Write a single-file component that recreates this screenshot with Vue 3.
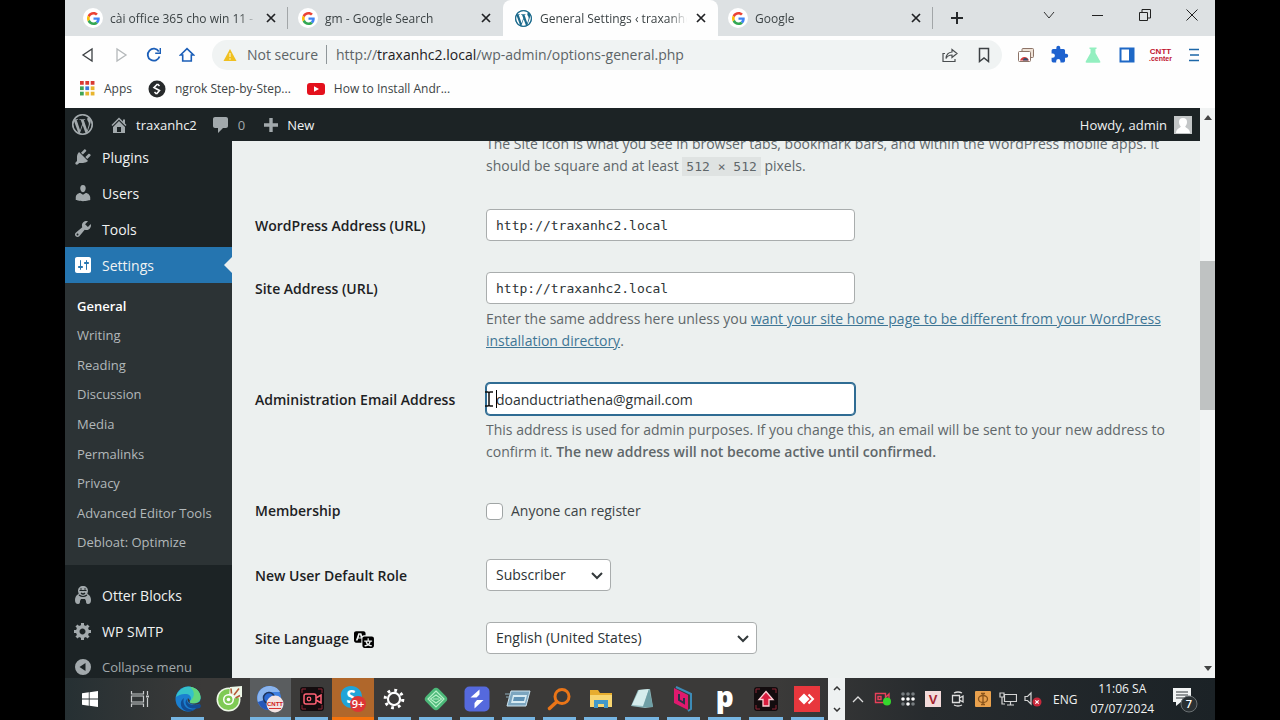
<template>
  <div class="desktop">
    <div class="browser">
      <!-- Tab strip -->
      <div class="tab-strip">
        <div
          v-for="(tab, index) in tabs"
          :key="index"
          class="tab"
          :class="{ active: index === activeTab, divided: tab.divided }"
          @click="activeTab = index"
        >
          <span class="favicon">
            <svg v-if="tab.icon === 'google'" viewBox="0 0 48 48" width="13" height="13">
              <path fill="#ea4335" d="M24 9.5c3.54 0 6.71 1.22 9.21 3.6l6.85-6.85C35.9 2.38 30.47 0 24 0 14.62 0 6.51 5.38 2.56 13.22l7.98 6.19C12.43 13.72 17.74 9.5 24 9.5z" />
              <path fill="#4285f4" d="M46.98 24.55c0-1.57-.15-3.09-.38-4.55H24v9.02h12.94c-.58 2.96-2.26 5.48-4.78 7.18l7.73 6c4.51-4.18 7.09-10.36 7.09-17.65z" />
              <path fill="#fbbc05" d="M10.53 28.59c-.48-1.45-.76-2.99-.76-4.59s.27-3.14.76-4.59l-7.98-6.19C.92 16.46 0 20.12 0 24c0 3.88.92 7.54 2.56 10.78l7.97-6.19z" />
              <path fill="#34a853" d="M24 48c6.48 0 11.93-2.13 15.89-5.81l-7.73-6c-2.15 1.45-4.92 2.3-8.16 2.3-6.26 0-11.57-4.22-13.47-9.91l-7.98 6.19C6.51 42.62 14.62 48 24 48z" />
            </svg>
            <svg v-else viewBox="0 0 24 24" width="17" height="17">
              <path fill="#1b6a8c" :d="wpLogo" />
              <circle cx="12" cy="12" r="11" fill="none" stroke="#1b6a8c" stroke-width="1.5" />
            </svg>
          </span>
          <span class="tab-title">{{ tab.title }}</span>
          <button class="tab-close" aria-label="Close tab">
            <svg viewBox="0 0 10 10" width="10" height="10">
              <path d="M1 1l8 8M9 1L1 9" stroke="#202124" stroke-width="1.7" />
            </svg>
          </button>
        </div>
        <button class="new-tab" aria-label="New tab">
          <svg viewBox="0 0 14 14" width="14" height="14">
            <path d="M7 1v12M1 7h12" stroke="#26292b" stroke-width="2" />
          </svg>
        </button>
        <div class="window-controls">
          <button aria-label="Search tabs">
            <svg viewBox="0 0 12 12" width="12" height="12"><path d="M1 3l5 6 5-6" fill="none" stroke="#333" /></svg>
          </button>
          <button aria-label="Minimize">
            <svg viewBox="0 0 12 12" width="12" height="12"><path d="M1 6.5h11" stroke="#222" /></svg>
          </button>
          <button aria-label="Restore">
            <svg viewBox="0 0 12 12" width="12" height="12">
              <path d="M.5 3.5h8v8h-8zM3 3.5V.5h8.5v8.5H8.5" fill="none" stroke="#222" />
            </svg>
          </button>
          <button aria-label="Close">
            <svg viewBox="0 0 12 12" width="12" height="12"><path d="M.5.5l11 11M11.5.5l-11 11" stroke="#222" /></svg>
          </button>
        </div>
      </div>

      <!-- Address bar -->
      <div class="toolbar">
        <div class="nav-buttons">
          <button aria-label="Back">
            <svg viewBox="0 0 16 16" width="16" height="16"><path d="M12 2v12L3 8z" fill="none" stroke="#3c4043" stroke-width="1.3" /></svg>
          </button>
          <button aria-label="Forward">
            <svg viewBox="0 0 16 16" width="16" height="16"><path d="M4 2v12l9-6z" fill="none" stroke="#b4b8ba" stroke-width="1.3" /></svg>
          </button>
          <button aria-label="Reload">
            <svg viewBox="0 0 16 16" width="16" height="16">
              <path d="M13.5 9.500A6 6 0 1 1 12.800 4.400" fill="none" stroke="#1c5fb8" stroke-width="1.8" />
              <path d="M15 1v6H9.200V5.600h4.400V1z" fill="#1c5fb8" />
            </svg>
          </button>
          <button aria-label="Home">
            <svg viewBox="0 0 16 16" width="16" height="16">
              <path d="M1.500 8L8 1.700 14.500 8h-2.200v6H3.700V8z" fill="none" stroke="#1c5fb8" stroke-width="1.6" />
            </svg>
          </button>
        </div>
        <div class="omnibox">
          <svg viewBox="0 0 14 14" width="14" height="14">
            <path d="M7 1l6.500 12H.5z" fill="#f0c020" />
            <path d="M7 5v4M7 10.300v1.400" stroke="#fbeeb8" stroke-width="1.3" />
          </svg>
          <span class="not-secure">Not secure</span>
          <span class="url">http://<b>traxanhc2.local</b>/wp-admin/options-general.php</span>
          <button aria-label="Share">
            <svg viewBox="0 0 16 16" width="16" height="16" fill="none" stroke="#4a4e50" stroke-width="1.2">
              <path d="M3 6.500H1v8h12V12" />
              <path d="M10 2.500l5 4-5 4V8C7 8 5.300 9 4 11.500 4.300 7.500 6.500 5.300 10 5z" />
            </svg>
          </button>
          <button aria-label="Bookmark this tab">
            <svg viewBox="0 0 16 16" width="16" height="16"><path d="M3.500 1.500h9v13L8 11l-4.500 3.500z" fill="none" stroke="#3c4043" stroke-width="1.5" /></svg>
          </button>
        </div>
        <div class="extensions">
          <button aria-label="Screenshot tool">
            <svg viewBox="0 0 16 16" width="16" height="16">
              <rect x="4" y="1.5" width="11.5" height="9" rx="1" fill="#efe2d6" stroke="#8d7468" />
              <rect x=".5" y="4.5" width="12" height="10" rx="1" fill="#fff" stroke="#8d7468" />
              <path d="M2 13.500a4.800 5.500 0 0 1 9 0z" fill="#d33b3b" />
              <path d="M5 13.500a2.200 2.200 0 0 1 5 0z" fill="#35506e" />
            </svg>
          </button>
          <button aria-label="Extensions">
            <svg viewBox="0 0 24 24" width="19" height="19" fill="#1e62cf">
              <path d="M20.500 11H19V7a2 2 0 0 0-2-2h-4V3.500a2.500 2.500 0 0 0-5 0V5H4a2 2 0 0 0-2 2v3.800h1.500a2.700 2.700 0 0 1 0 5.400H2V20a2 2 0 0 0 2 2h3.800v-1.500a2.700 2.700 0 0 1 5.400 0V22H17a2 2 0 0 0 2-2v-4h1.500a2.500 2.500 0 0 0 0-5z" />
            </svg>
          </button>
          <button aria-label="Labs">
            <svg viewBox="0 0 16 16" width="16" height="16" fill="#93efc0">
              <path d="M4.500.5h7V2H10.500v4l4.800 8.500q.5 1.200-1 1.200H1.700q-1.500 0-1-1.200L5.500 6V2h-1z" />
            </svg>
          </button>
          <button aria-label="Side panel">
            <svg viewBox="0 0 16 16" width="16" height="16">
              <path d="M1.500 1.500h13v13h-13z" fill="#fff" stroke="#1e68c6" stroke-width="2" />
              <path d="M10 1.500h4.500v13H10z" fill="#1e68c6" />
            </svg>
          </button>
          <button aria-label="Profile" class="profile"><span>CNTT</span><small>.center</small></button>
          <button aria-label="Menu">
            <svg viewBox="0 0 12 14" width="12" height="14"><path d="M1 1.500h10M2 7h9M1 12.500h10" stroke="#1d67a8" stroke-width="1.7" /></svg>
          </button>
        </div>
      </div>

      <!-- Bookmarks -->
      <nav class="bookmarks">
        <a href="#">
          <svg viewBox="0 0 14 14" width="15" height="15">
            <rect v-for="(dot, i) in appDots" :key="i" :x="(i % 3) * 5" :y="Math.floor(i / 3) * 5" width="3.5" height="3.5" :fill="dot" />
          </svg>
          Apps
        </a>
        <a href="#">
          <svg viewBox="0 0 18 18" width="18" height="18">
            <circle cx="9" cy="9" r="8.5" fill="#272a2b" />
            <path d="M9.500 4L6 7.500l5.500 3L8.500 14M9.500 4l2 2M8.500 14l-2-2" fill="none" stroke="#fff" stroke-width="1.6" />
          </svg>
          ngrok Step-by-Step...
        </a>
        <a href="#">
          <svg viewBox="0 0 18 12" width="18" height="12">
            <rect width="18" height="12" rx="3" fill="#e3101c" />
            <path d="M7 3.300l5 2.700-5 2.700z" fill="#fff" />
          </svg>
          How to Install Andr...
        </a>
      </nav>

      <!-- WordPress page -->
      <div class="viewport">
        <div class="page">
          <header class="admin-bar">
            <a href="#" class="wp-logo" aria-label="About WordPress">
              <svg viewBox="0 0 24 24" width="21" height="21">
                <path :d="wpLogo" />
                <circle cx="12" cy="12" r="11" class="ring" />
              </svg>
            </a>
            <a href="#" class="site-name">
              <svg viewBox="0 0 20 20" width="20" height="20">
                <path d="M16 8.500l1.530 1.530-1.060 1.060L10 4.600l-6.470 6.490-1.060-1.060L10 2.500l4 4v-2h2v4zm-6-2.460l6 5.990V18H4v-5.970zM12 17v-5H8v5h4z" />
              </svg>
              traxanhc2
            </a>
            <a href="#" class="comments">
              <svg viewBox="0 0 20 20" width="20" height="20">
                <path d="M4 2h11c1.100 0 2 .9 2 2v7c0 1.100-.9 2-2 2h-3l-5 5v-5H4c-1.100 0-2-.9-2-2V4c0-1.100.9-2 2-2z" />
              </svg>
              <span>0</span>
            </a>
            <a href="#" class="new-content">
              <svg viewBox="0 0 16 16" width="16" height="16"><path d="M6.300 1h3.400v5.300H15v3.400H9.700V15H6.300V9.700H1V6.300h5.300z" /></svg>
              New
            </a>
            <a href="#" class="account">
              Howdy, admin
              <svg viewBox="0 0 18 18" width="18" height="18">
                <path fill="#c3c6c7" d="M0 0h18v18H0z" />
                <path fill="#fff" d="M9 2a4 4 0 0 1 4 4c0 2-1 3.500-1.800 4.500.3 1.500 4.300 1.500 4.800 6.500H2c.5-5 4.500-5 4.800-6.500C6 9.500 5 8 5 6a4 4 0 0 1 4-4z" />
              </svg>
            </a>
          </header>

          <div class="page-body">
            <nav class="sidebar">
              <div class="menu-top">
                <a v-for="item in menu" :key="item.label" href="#" class="menu-item" :class="{ current: item.current }">
                  <svg viewBox="0 0 20 20" width="20" height="20"><path :d="item.path" /></svg>
                  {{ item.label }}
                </a>
              </div>
              <div class="submenu">
                <a v-for="(name, index) in submenu" :key="name" href="#" :class="{ selected: index === 0 }">{{ name }}</a>
              </div>
              <div class="menu-bottom">
                <a href="#" class="menu-item">
                  <svg viewBox="0 0 20 20" width="20" height="20">
                    <path d="M10 1c3 0 5 2 5 5l-.7 3C17 10 18 12.500 18 15c0 2.500-1 4-3 4s-2-1.500-2-3l-1-2H8l-1 2c0 1.500 0 3-2 3s-3-1.500-3-4c0-2.500 1-5 3.700-6L5 6c0-3 2-5 5-5z" />
                    <path d="M6.500 5.500h7M8 8q2 2 4 0M6 10q4 3 8 0" fill="none" stroke="#1c2325" stroke-width="1.2" />
                    <circle cx="8" cy="4" r=".8" fill="#1c2325" />
                    <circle cx="12" cy="4" r=".8" fill="#1c2325" />
                  </svg>
                  Otter Blocks
                </a>
                <a href="#" class="menu-item">
                  <svg viewBox="0 0 20 20" width="20" height="20"><path :d="gear" /></svg>
                  WP SMTP
                </a>
                <button class="menu-item collapse">
                  <svg viewBox="0 0 20 20" width="20" height="20">
                    <path fill-rule="evenodd" d="M10 2a8 8 0 1 0 0 16 8 8 0 0 0 0-16zM12.500 6v8L6.500 10z" />
                  </svg>
                  Collapse menu
                </button>
              </div>
            </nav>

            <main class="content">
              <form class="settings" @submit.prevent>
                <div class="row">
                  <div class="field">
                    <p>
                      The Site Icon is what you see in browser tabs, bookmark bars, and within the WordPress mobile apps. It
                      should be square and at least <code>512 × 512</code> pixels.
                    </p>
                  </div>
                </div>
                <div class="row">
                  <label for="siteurl">WordPress Address (URL)</label>
                  <div class="field">
                    <input id="siteurl" v-model="siteUrl" type="text" class="code" />
                  </div>
                </div>
                <div class="row">
                  <label for="home">Site Address (URL)</label>
                  <div class="field">
                    <input id="home" v-model="homeUrl" type="text" class="code" />
                    <p>
                      Enter the same address here unless you
                      <a href="#">want your site home page to be different from your WordPress installation directory</a>.
                    </p>
                  </div>
                </div>
                <div class="row">
                  <label for="admin-email">Administration Email Address</label>
                  <div class="field">
                    <input id="admin-email" v-model="email" type="text" class="focused" />
                    <span class="caret"></span>
                    <svg class="pointer" viewBox="0 0 8 16" width="8" height="16">
                      <path d="M0 1h3l1 1 1-1h3M4 2v12M0 15h3l1-1 1 1h3" fill="none" stroke="#111" stroke-width="1.5" />
                    </svg>
                    <p>
                      This address is used for admin purposes. If you change this, an email will be sent to your new address to
                      confirm it. <strong>The new address will not become active until confirmed.</strong>
                    </p>
                  </div>
                </div>
                <div class="row">
                  <span class="row-title">Membership</span>
                  <div class="field">
                    <label class="check"><input v-model="anyone" type="checkbox" />Anyone can register</label>
                  </div>
                </div>
                <div class="row">
                  <label for="role">New User Default Role</label>
                  <div class="field">
                    <span class="select role">
                      <select id="role"><option>Subscriber</option></select>
                      <svg viewBox="0 0 12 8" width="12" height="8"><path d="M1 1l5 5 5-5" /></svg>
                    </span>
                  </div>
                </div>
                <div class="row">
                  <label for="language">
                    Site Language
                    <svg viewBox="0 0 20 20" width="21" height="21">
                      <path d="M11 7H9.490c-.63 0-1.250.3-1.590.7L7 5H4.130l-2.390 7h1.690l.74-2H7v4H2c-1.100 0-2-.9-2-2V5c0-1.100.9-2 2-2h7c1.100 0 2 .9 2 2v2zM6.510 9H4.490l1-2.930zM10 8h7c1.100 0 2 .9 2 2v7c0 1.100-.9 2-2 2h-7c-1.100 0-2-.9-2-2v-7c0-1.100.9-2 2-2zm7.250 5v-1.080h-3.170V9.750h-1.160v2.170H9.750V13h1.280c.11.850.56 1.850 1.280 2.620-.87.360-1.890.620-2.310.620-.01.020.22.970.2 1.460.84 0 2.210-.5 3.280-1.150 1.090.65 2.480 1.150 3.340 1.150-.02-.49.2-1.440.2-1.460-.43 0-1.490-.27-2.380-.63.7-.77 1.140-1.770 1.250-2.610h1.260zm-3.810 1.930c-.5-.46-.85-1.130-1.010-1.930h2.090c-.17.8-.51 1.470-1 1.930l-.04.030s-.03-.02-.04-.03z" />
                    </svg>
                  </label>
                  <div class="field">
                    <span class="select language">
                      <select id="language"><option>English (United States)</option></select>
                      <svg viewBox="0 0 12 8" width="12" height="8"><path d="M1 1l5 5 5-5" /></svg>
                    </span>
                  </div>
                </div>
              </form>
            </main>
          </div>
        </div>

        <div class="scrollbar">
          <svg viewBox="0 0 8 5" width="8" height="5"><path d="M0 5l4-5 4 5z" fill="#444" /></svg>
          <div class="track"><div class="thumb"></div></div>
          <svg viewBox="0 0 8 5" width="8" height="5"><path d="M0 0l4 5 4-5z" fill="#444" /></svg>
        </div>
      </div>
    </div>

    <!-- Windows taskbar -->
    <footer class="taskbar">
      <div class="system-buttons">
        <button aria-label="Start">
          <svg viewBox="0 0 16 16" width="16" height="16" fill="#fff">
            <path d="M0 2.300l6.800-1v6.300H0zM7.600 1.200L16 0v7.600H7.600zM0 8.400h6.800v6.300l-6.800-1zM7.600 8.400H16V16l-8.400-1.200z" />
          </svg>
        </button>
        <button aria-label="Task view">
          <svg viewBox="0 0 20 18" width="20" height="18" fill="none" stroke="#c8cbcc" stroke-width="1.2">
            <path d="M1.500 1v3h12V1M1.500 17v-3h12v3M1.500 6h12v6h-12zM17.500 1v4M17.500 8v9" />
            <path d="M16 6.500h3" stroke-width="2" />
          </svg>
        </button>
      </div>
      <div class="apps">
        <button class="running" aria-label="Edge">
          <svg viewBox="0 0 26 26" width="26" height="26">
            <circle cx="13" cy="13" r="12.5" fill="#1b7fd0" />
            <path d="M1 11C3 3 10 0 15 .7 22 1.500 26 7 25.500 12c-.5 4-4 5.500-8 5.500-2.500 0-3-1.500-2-3 1.500-3-.5-6-4-6.500C7 7.500 3 9 1 11z" fill="#35c1c9" />
            <path d="M15 .7C22 1.500 26 7 25.500 12c-.5 4-4 5.500-8 5.500-2.500 0-3-1.500-2-3C20 11 20 5 15 .7z" fill="#62d77c" />
            <path d="M9 12c-2 6 2 12 9 11.500 2-.3 4-1.500 5-2.800-3 4-8 5.500-12 4.300C5 23 4 15 9 12z" fill="#124d94" />
            <path d="M12 13c-1 4 4 8 13 5l1 2-1 2c-4 1-11 1-13-2-2-2-2-5.500 0-7z" fill="#124d94" />
            <path d="M13 12c-1.500 3 1 7.500 10 6.500l3-1.500v-4c-1 4-5 5-9 4.500-2.500 0-3-1.500-2-3z" fill="#3a3a39" />
          </svg>
        </button>
        <button aria-label="Coc Coc">
          <svg viewBox="0 0 26 26" width="26" height="26">
            <circle cx="12.5" cy="13.5" r="12" fill="#eef7e8" />
            <path d="M20 1h5v8l-6 3-4-6z" fill="#eef7e8" />
            <circle cx="12.5" cy="13.5" r="10.5" fill="#7fca55" />
            <path d="M12.500 13.500L14 1l12-1v11z" fill="#eef7e8" />
            <circle cx="12.5" cy="13.5" r="5.5" fill="#fff" />
            <circle cx="12.500" cy="13.500" r="4" fill="#7fca55" />
            <circle cx="12.5" cy="13.5" r="1.8" fill="#fff" />
            <path d="M15.500 7.500l-.5-5M18 9l5-6.500M19.500 12l4.500-2.500" stroke="#b65b38" stroke-width="1.6" />
          </svg>
        </button>
        <button class="running active" aria-label="Chromium">
          <svg viewBox="0 0 28 28" width="28" height="28">
            <circle cx="13" cy="13" r="12" fill="#3f7fe0" />
            <path d="M13 1A12 12 0 0 0 2 17l6-1c-2-6 2-10 7-9h9C22 3 18 1 13 1z" fill="#8ab4ee" />
            <path d="M2 17c2 5 6 8 11 8l3-6c-5 1-8-1-8-4z" fill="#2657b8" />
            <circle cx="13" cy="13" r="5.5" fill="#2d6ad4" stroke="#20355e" stroke-width="1.5" />
            <circle cx="19" cy="19" r="8.5" fill="#f3e4e4" />
            <text x="19" y="21" text-anchor="middle" class="badge-cntt">CNTT</text>
            <path d="M13 23.500h12" stroke="#d83333" />
          </svg>
        </button>
        <button class="running" aria-label="Recorder">
          <svg viewBox="0 0 26 26" width="26" height="26">
            <rect x="1" y="1" width="24" height="24" rx="3" fill="#130c0e" />
            <path d="M3 7V3h4M19 3h4v4M23 19v4h-4M7 23H3v-4" fill="none" stroke="#8d2635" />
            <rect x="5" y="8" width="12" height="10" rx="2" fill="none" stroke="#ff6175" stroke-width="1.5" />
            <path d="M17 12l5-3v8l-5-3" fill="none" stroke="#ff6175" stroke-width="1.5" />
            <circle cx="10" cy="13" r="1.8" fill="none" stroke="#ff6175" stroke-width="1.3" />
          </svg>
        </button>
        <button class="running alert" aria-label="Skype">
          <svg viewBox="0 0 28 28" width="28" height="28">
            <path d="M12 1c6 0 11 4 11 11 0 6-4 11-10 11C6 23 2 18 2 12 1 6 5 1 12 1z" fill="#21a4d8" />
            <text x="12" y="18" text-anchor="middle" class="skype-s">S</text>
            <circle cx="19" cy="19" r="8" fill="#dd3535" />
            <text x="19" y="23" text-anchor="middle" class="badge-count">9+</text>
          </svg>
        </button>
        <button class="running" aria-label="Settings">
          <svg viewBox="0 0 20 20" width="22" height="22" fill="none" stroke="#fff">
            <circle cx="10" cy="10" r="5.5" stroke-width="2" />
            <circle cx="10" cy="10" r="8" stroke-width="2.8" stroke-dasharray="2.5 3.783" />
          </svg>
        </button>
        <button class="running" aria-label="LocalWP">
          <svg viewBox="0 0 26 26" width="26" height="26">
            <rect x="4" y="4" width="18" height="18" rx="4" transform="rotate(45 13 13)" fill="#4cb879" />
            <path d="M13 5l8 8-8 8-8-8zM13 9l5.500 4-5.500 4-5.500-4zM10 13h6" fill="none" stroke="#b6f0c8" stroke-width="1.2" />
          </svg>
        </button>
        <button class="running" aria-label="Linear">
          <svg viewBox="0 0 26 26" width="26" height="26">
            <rect x=".5" y=".5" width="25" height="25" rx="5" fill="#5569dd" />
            <path d="M15.500 3.500L6.500 11.500h6l3-3zM10.500 22.500l9-8.500h-6.500l-2.500 3z" fill="#fff" />
          </svg>
        </button>
        <button class="running" aria-label="Run">
          <svg viewBox="0 0 26 20" width="26" height="20">
            <path d="M6 2h19l-4 15H2z" fill="#7ba5bf" stroke="#cde3ef" />
            <path d="M8 6h14l-2 8H6z" fill="#d7ebf3" />
            <path d="M9 8h11l-1 4H8z" fill="#5f92b5" />
            <path d="M0 5h5M1 8h4" stroke="#91afbf" />
          </svg>
        </button>
        <button class="running" aria-label="Search tool">
          <svg viewBox="0 0 24 24" width="24" height="24" fill="none" stroke="#ea7518">
            <circle cx="15" cy="9.5" r="7" stroke-width="3" />
            <path d="M9.500 15L2.500 21.500" stroke-width="3.5" stroke-linecap="round" />
          </svg>
        </button>
        <button class="running" aria-label="File Explorer">
          <svg viewBox="0 0 24 20" width="24" height="20">
            <path d="M1 1h8l2 3h12v14H1z" fill="#e7ad2f" />
            <path d="M1 6h22v12H1z" fill="#f8d671" />
            <path d="M5 19v-8h14v8h-4v-4H9v4z" fill="#4399c9" />
          </svg>
        </button>
        <button class="running" aria-label="Notepad">
          <svg viewBox="0 0 24 24" width="24" height="24">
            <path d="M8 3l12-1 3 18-8 1-14-2z" fill="#8fb9bd" />
            <path d="M9 3l10-1-6 17-11-1z" fill="#d5ecec" />
            <path d="M19 2l4 18H13z" fill="#6f9fa5" />
          </svg>
        </button>
        <button class="running" aria-label="Laragon">
          <svg viewBox="0 0 22 26" width="22" height="26">
            <path d="M4 1l15 7v15l-3 2" fill="none" stroke="#3d8bb7" stroke-width="2" />
            <path d="M2 2l14 7v15L2 17z" fill="#e0196e" />
            <path d="M7 8v6l5 3v-5" fill="none" stroke="#2b3148" stroke-width="2" />
          </svg>
        </button>
        <button class="running" aria-label="Pandora"><span class="letter-p">p</span></button>
        <button class="running" aria-label="Uploader">
          <svg viewBox="0 0 26 26" width="26" height="26">
            <rect x="1" y="1" width="24" height="24" rx="3" fill="#130c0e" />
            <path d="M3 7V3h4M19 3h4v4M23 19v4h-4M7 23H3v-4" fill="none" stroke="#8d2635" />
            <path d="M13 5.500l7 8h-4V20h-6v-6.500H6z" fill="#d91e3f" stroke="#ffd0d6" stroke-width="1.3" />
          </svg>
        </button>
        <button class="running" aria-label="AnyDesk">
          <svg viewBox="0 0 26 26" width="26" height="26">
            <path d="M0 0h26v26H0z" fill="#e8373d" />
            <path d="M10 7.500l5.500 5.500-5.500 5.500L4.500 13z" fill="#fff" />
            <path d="M14.500 8.500L19 13l-4.500 4.500" fill="none" stroke="#fff" stroke-width="2" />
          </svg>
        </button>
      </div>
      <div class="app-scroll">
        <button aria-label="Scroll up"><svg viewBox="0 0 8 5" width="8" height="5"><path d="M1 4l3-3 3 3" fill="none" stroke="#333" stroke-width="1.5" /></svg></button>
        <button aria-label="Scroll down"><svg viewBox="0 0 8 5" width="8" height="5"><path d="M1 1l3 3 3-3" fill="none" stroke="#333" stroke-width="1.5" /></svg></button>
      </div>
      <div class="tray">
        <div class="tray-icons">
          <button aria-label="Show hidden icons">
            <svg viewBox="0 0 12 8" width="12" height="8"><path d="M1 7l5-5 5 5" fill="none" stroke="#ddd" stroke-width="1.3" /></svg>
          </button>
          <svg viewBox="0 0 18 14" width="18" height="14">
            <path d="M1.500 1.500h10v9h-10zM4 4.500h3v3H4zM12 5l3-3v5" fill="none" stroke="#e8405a" stroke-width="1.4" />
            <circle cx="13" cy="9.5" r="4" fill="#35d62d" />
          </svg>
          <svg viewBox="0 0 16 16" width="16" height="16">
            <template v-for="row in 3" :key="row">
              <circle v-for="col in 3" :key="col" :cx="col * 5 - 2" :cy="row * 5 - 2" r="1.8" :fill="row === 2 || (row === 3 && col === 2) ? '#fff' : '#777d80'" />
            </template>
          </svg>
          <svg viewBox="0 0 16 16" width="16" height="16">
            <path d="M0 0h16v16H0z" fill="#f3dada" />
            <text x="8" y="13" text-anchor="middle" class="unikey">V</text>
          </svg>
          <svg viewBox="0 0 14 16" width="14" height="16" fill="none" stroke="#dedede" stroke-width="1.3">
            <path d="M3 2q4-2 8 0M3 14q4 2 8 0M1.500 4.500h7v7h-7zM8.500 7L12 5v6L8.500 9" />
          </svg>
          <svg viewBox="0 0 16 16" width="16" height="16">
            <rect width="16" height="16" rx="1" fill="#e9a14d" />
            <path d="M8 2v12M6 2.500h4M6 13.500h4" stroke="#8b551c" stroke-width="1.3" />
            <ellipse cx="8" cy="8" rx="4.5" ry="3.5" fill="none" stroke="#8b551c" stroke-width="1.3" />
          </svg>
          <svg viewBox="0 0 18 14" width="18" height="14" fill="none" stroke="#d4d4d4" stroke-width="1.2">
            <path d="M5.500 2.500h12v7h-12zM11.500 10v3M8 13h7M1 1h4v4H1zM3 5v7h3" />
          </svg>
          <svg viewBox="0 0 18 16" width="18" height="16">
            <path d="M1 5.500h2.500L7 2v11L3.500 9.500H1z" fill="none" stroke="#d4d4d4" stroke-width="1.2" />
            <circle cx="13" cy="11" r="4.5" fill="#c9283b" />
            <path d="M11.300 9.300l3.400 3.400M14.700 9.300l-3.400 3.400" stroke="#fff" stroke-width="1.2" />
          </svg>
        </div>
        <span class="lang">ENG</span>
        <div class="clock"><span>11:06 SA</span><span>07/07/2024</span></div>
        <button class="notifications" aria-label="Notifications">
          <svg viewBox="0 0 28 28" width="28" height="28">
            <path d="M2 3h18v14H10l-5 4v-4H2z" fill="#f2f4f4" />
            <path d="M5 7h12M5 10h12M5 13h8" stroke="#30363a" />
            <circle cx="18" cy="19" r="8" fill="#2a3033" stroke="#6a7073" />
            <text x="18" y="23" text-anchor="middle" class="badge-count">7</text>
          </svg>
        </button>
      </div>
    </footer>
  </div>
</template>

<script setup>
import { ref } from "vue";

const activeTab = ref(2);
const siteUrl = ref("http://traxanhc2.local");
const homeUrl = ref("http://traxanhc2.local");
const email = ref("doanductriathena@gmail.com");
const anyone = ref(false);

const tabs = [
  { title: "cài office 365 cho win 11 -", icon: "google", divided: true },
  { title: "gm - Google Search", icon: "google" },
  { title: "General Settings ‹ traxanhc2", icon: "wordpress" },
  { title: "Google", icon: "google", divided: true },
];

const appDots = ["#d93a32", "#d93a32", "#d93a32", "#3fa455", "#3b78d8", "#e8b52d", "#3fa455", "#e8b52d", "#e8b52d"];

// Icon outlines that are used more than once
const wpLogo =
  "M21.469 6.825c.84 1.537 1.318 3.3 1.318 5.175 0 3.979-2.156 7.456-5.363 9.325l3.295-9.527c.615-1.54.82-2.771.82-3.864 0-.405-.026-.78-.07-1.11m-7.981.105c.647-.03 1.232-.105 1.232-.105.582-.075.514-.93-.067-.899 0 0-1.755.135-2.88.135-1.064 0-2.85-.15-2.85-.15-.585-.03-.661.855-.075.885 0 0 .54.061 1.125.09l1.68 4.605-2.37 7.08L5.354 6.9c.649-.03 1.234-.1 1.234-.1.585-.075.516-.93-.065-.896 0 0-1.746.138-2.874.138-.2 0-.438-.008-.69-.015C4.911 3.15 8.235 1.215 12 1.215c2.809 0 5.365 1.072 7.286 2.833-.046-.003-.091-.009-.141-.009-1.06 0-1.812.923-1.812 1.914 0 .89.513 1.643 1.06 2.531.411.72.89 1.643.89 2.977 0 .915-.354 1.994-.821 3.479l-1.075 3.585-3.9-11.61.001.014zM12 22.784c-1.059 0-2.081-.153-3.048-.437l3.237-9.406 3.315 9.087c.024.053.05.101.078.149-1.12.393-2.325.609-3.582.609M1.211 12c0-1.564.336-3.05.935-4.39L7.29 21.709C3.694 19.96 1.212 16.271 1.211 12M12 0C5.385 0 0 5.385 0 12s5.385 12 12 12 12-5.385 12-12S18.615 0 12 0";
const gear =
  "M18 12h-2.18c-.17.7-.44 1.35-.81 1.93l1.54 1.54-2.1 2.1-1.54-1.54c-.58.36-1.23.63-1.91.79V19H8v-2.18c-.68-.16-1.33-.43-1.91-.79l-1.54 1.54-2.12-2.12 1.54-1.54c-.36-.58-.63-1.23-.79-1.91H1V9.03h2.17c.16-.7.44-1.35.8-1.94L2.43 5.55l2.1-2.1 1.54 1.54c.58-.37 1.24-.64 1.93-.81V2h3v2.18c.68.16 1.33.43 1.91.79l1.54-1.54 2.12 2.12-1.54 1.54c.36.59.64 1.24.8 1.94H18V12zm-8.5 1.5c1.66 0 3-1.34 3-3s-1.34-3-3-3-3 1.34-3 3 1.34 3 3 3z";

const menu = [
  {
    label: "Plugins",
    path: "M13.11 4.36L9.87 7.6 8 5.73l3.24-3.24c.35-.34 1.05-.2 1.56.32.52.51.66 1.21.31 1.55zm-8 1.77l.91-1.12 9.01 9.01-1.19.84c-.71.71-2.63 1.16-3.82 1.16H6.14L4.9 17.26c-.59.59-1.54.59-2.12 0-.59-.58-.59-1.53 0-2.12L4 13.88v-3.87c0-1.19.4-3.16 1.11-3.88zm7.26 3.97l3.24-3.24c.34-.35 1.04-.21 1.55.31.52.51.66 1.21.31 1.55l-3.24 3.25z",
  },
  {
    label: "Users",
    path: "M10 9.25c-2.27 0-2.73-3.44-2.73-3.44C7 4.02 7.82 2 9.97 2c2.16 0 2.98 2.02 2.71 3.81 0 0-.41 3.44-2.68 3.44zm0 2.57L12.72 10c2.39 0 4.52 2.33 4.52 4.53v2.49s-3.65 1.13-7.24 1.13c-3.65 0-7.24-1.13-7.24-1.13v-2.49c0-2.25 1.94-4.48 4.47-4.48z",
  },
  {
    label: "Tools",
    path: "M16.68 9.77c-1.34 1.34-3.3 1.67-4.95.99l-5.41 6.52c-.99.99-2.59.99-3.58 0s-.99-2.59 0-3.57l6.52-5.42c-.68-1.65-.35-3.61.99-4.95 1.28-1.28 3.12-1.62 4.72-1.06l-2.89 2.89 2.82 2.82 2.86-2.87c.53 1.58.18 3.39-1.08 4.65zM3.81 16.21c.4.39 1.04.39 1.43 0 .4-.4.4-1.04 0-1.43-.39-.4-1.03-.4-1.43 0-.39.39-.39 1.03 0 1.43z",
  },
  {
    label: "Settings",
    current: true,
    path: "M18 16V4c0-1.1-.9-2-2-2H4c-1.1 0-2 .9-2 2v12c0 1.1.9 2 2 2h12c1.1 0 2-.9 2-2zM8 11h1c.55 0 1 .45 1 1s-.45 1-1 1H8v1.5c0 .28-.22.5-.5.5s-.5-.22-.5-.5V13H6c-.55 0-1-.45-1-1s.45-1 1-1h1V5.5c0-.28.22-.5.5-.5s.5.22.5.5V11zm5-2h-1c-.55 0-1-.45-1-1s.45-1 1-1h1V5.5c0-.28.22-.5.5-.5s.5.22.5.5V7h1c.55 0 1 .45 1 1s-.45 1-1 1h-1v5.5c0 .28-.22.5-.5.5s-.5-.22-.5-.5V9z",
  },
];

const submenu = [
  "General",
  "Writing",
  "Reading",
  "Discussion",
  "Media",
  "Permalinks",
  "Privacy",
  "Advanced Editor Tools",
  "Debloat: Optimize",
];
</script>

<style>
body {
  background: #000;
}
</style>

<style scoped>
.desktop {
  display: flex;
  flex-direction: column;
  height: 100vh;
  padding: 0 65px;
  box-sizing: border-box;
  overflow: hidden;
  background: #000;
  font-family: "Segoe UI", "Open Sans", sans-serif;
  font-size: 14px;
  color: #3c4345;
}

.desktop *,
.desktop *::before {
  box-sizing: border-box;
}

button {
  display: flex;
  align-items: center;
  justify-content: center;
  padding: 0;
  border: 0;
  background: none;
  font: inherit;
  color: inherit;
}

a {
  color: inherit;
  text-decoration: none;
}

svg {
  flex: none;
}

.browser {
  flex: 1;
  min-height: 0;
  display: flex;
  flex-direction: column;
  background: #fefefe;
}

/* Tabs */
.tab-strip {
  display: flex;
  flex: none;
  height: 36px;
  padding-left: 8px;
  background: #dde1e3;
}

.tab {
  display: flex;
  align-items: center;
  flex: 0 1 215px;
  min-width: 0;
  padding: 0 8px 0 10px;
  border-right: 1px solid transparent;
  font-size: 12px;
}

.tab.divided {
  border-image: linear-gradient(transparent 20%, #a2a6a8 20%, #a2a6a8 80%, transparent 80%) 1;
}

.tab.active {
  background: #fefefe;
  border-radius: 8px 8px 0 0;
}

.favicon {
  display: flex;
  align-items: center;
  justify-content: center;
  flex: none;
  width: 20px;
  height: 20px;
  margin-right: 7px;
  border-radius: 50%;
  background: #fff;
}

.tab-title {
  flex: 1;
  min-width: 0;
  margin-right: 6px;
  overflow: hidden;
  white-space: nowrap;
  mask-image: linear-gradient(to right, #000 88%, transparent);
}

.tab-close {
  width: 16px;
  height: 16px;
}

.new-tab {
  width: 48px;
}

.window-controls {
  display: flex;
  margin-left: auto;
  padding-bottom: 6px;
}

.window-controls button {
  width: 48px;
}

.window-controls button:last-child {
  width: 46px;
}

/* Toolbar */
.toolbar {
  display: flex;
  align-items: center;
  flex: none;
  height: 37px;
  padding: 0 4px 0 6px;
}

.nav-buttons {
  display: flex;
  margin-right: 9px;
}

.nav-buttons button {
  width: 33px;
  height: 30px;
}

.omnibox {
  display: flex;
  align-items: center;
  flex: 1;
  min-width: 0;
  height: 30px;
  padding: 0 1px 0 11px;
  border-radius: 15px;
  background: #f0f3f3;
  color: #5d6467;
}

.not-secure {
  margin-left: 10px;
  padding-right: 8px;
  border-right: 1px solid #8f9699;
  white-space: nowrap;
}

.url {
  flex: 1;
  min-width: 0;
  margin-left: 9px;
  overflow: hidden;
  white-space: nowrap;
}

.url b {
  font-weight: 400;
  color: #1d2022;
}

.omnibox button {
  width: 34px;
}

.extensions {
  display: grid;
  grid-template-columns: repeat(6, 1fr);
  flex: 0 0 202px;
  margin-left: 7px;
}

.extensions .profile {
  flex-direction: column;
  font-family: "Liberation Sans", sans-serif;
  font-size: 8px;
  font-weight: 700;
  line-height: 7px;
  color: #c0142f;
}

.profile small {
  font-size: 7px;
}

/* Bookmarks */
.bookmarks {
  display: flex;
  align-items: center;
  flex: none;
  gap: 16px;
  height: 35px;
  padding-left: 15px;
  padding-bottom: 4px;
  font-size: 12px;
}

.bookmarks a {
  display: flex;
  align-items: center;
  gap: 9px;
}

/* Page */
.viewport {
  display: flex;
  flex: 1;
  min-height: 0;
}

.page {
  display: flex;
  flex-direction: column;
  flex: 1;
  min-width: 0;
  background: #ecf0ef;
}

.admin-bar {
  display: flex;
  align-items: center;
  flex: none;
  height: 33px;
  padding: 0 8px 0 7px;
  background: #1c2325;
  font-size: 13px;
  color: #f0f2f2;
}

.admin-bar a {
  display: flex;
  align-items: center;
  gap: 7px;
}

.admin-bar svg {
  fill: #a2a9ac;
}

.admin-bar .ring {
  fill: none;
  stroke: #a2a9ac;
  stroke-width: 1.5;
}

.admin-bar .site-name {
  margin-left: 16px;
}

.admin-bar .comments {
  margin-left: 14px;
  color: #a2a9ac;
}

.admin-bar .new-content {
  margin-left: 18px;
  gap: 8px;
}

.admin-bar .account {
  margin-left: auto;
}

.page-body {
  display: flex;
  flex: 1;
  min-height: 0;
  overflow: hidden;
}

/* Sidebar */
.sidebar {
  flex: none;
  width: 167px;
  background: #1c2325;
}

.menu-top {
  margin-top: -2px;
}

.menu-item {
  position: relative;
  display: flex;
  align-items: center;
  justify-content: flex-start;
  gap: 9px;
  width: 100%;
  height: 36px;
  padding-left: 8px;
  color: #f0f2f2;
}

.menu-item svg {
  fill: #a2a9ac;
}

.menu-item.current {
  background: #2575b0;
}

.menu-item.current svg {
  fill: #fff;
}

.menu-item.current::after {
  content: "";
  position: absolute;
  right: 0;
  border: 8px solid transparent;
  border-right-color: #ecf0ef;
}

.menu-item.collapse {
  font-size: 13px;
  color: #a2a9ac;
}

.submenu {
  display: grid;
  grid-auto-rows: 1fr;
  align-items: center;
  height: 282px;
  padding: 8px 12px;
  background: #2c3335;
  font-size: 13px;
  color: #b2b8ba;
}

.submenu .selected {
  font-weight: 600;
  color: #fff;
}

.menu-bottom {
  padding-top: 12px;
}

/* Settings form */
.content {
  flex: 1;
  min-width: 0;
  padding: 0 24px 0 23px;
}

.settings {
  display: flex;
  flex-direction: column;
  gap: 31px;
  margin-top: -8px;
}

.row {
  display: grid;
  grid-template-columns: 231px 1fr;
}

.row > label,
.row-title {
  display: flex;
  align-items: center;
  gap: 5px;
  height: 32px;
  font-weight: 600;
  color: #1c2123;
}

.field {
  position: relative;
  grid-column: 2;
  line-height: 22px;
  color: #5f676a;
}

.field p {
  margin: 0;
}

.field input + p,
.field svg + p {
  margin-top: 4px;
}

.field a {
  color: #3f7695;
  text-decoration: underline;
}

.field strong {
  font-weight: 600;
}

code {
  padding: 2px 4px;
  background: #dfe3e2;
  font-family: "DejaVu Sans Mono", monospace;
  font-size: 13px;
}

.field input[type="text"] {
  display: block;
  width: 369px;
  max-width: 100%;
  height: 32px;
  padding: 0 9px;
  border: 1px solid #a9adad;
  border-radius: 4px;
  background: #fff;
  font: inherit;
  color: #2c3335;
}

.field input[type="text"].code {
  font-family: "DejaVu Sans Mono", monospace;
  font-size: 13px;
}

.field input[type="text"].focused {
  border-color: #2f6c93;
  box-shadow: 0 0 0 1px #2f6c93;
  outline: none;
}

.caret {
  position: absolute;
  top: 7px;
  left: 10px;
  width: 1px;
  height: 18px;
  background: #000;
}

.pointer {
  position: absolute;
  top: 8px;
  left: -1px;
}

.check {
  display: flex;
  align-items: center;
  gap: 8px;
  height: 34px;
  color: #3c4345;
}

.check input {
  appearance: none;
  width: 17px;
  height: 17px;
  margin: 0;
  border: 1px solid #a0a5a5;
  border-radius: 4px;
  background: #fff;
}

.check input:checked {
  background: #2575b0;
}

.select {
  position: relative;
  display: block;
  max-width: 100%;
}

.select.role {
  width: 125px;
}

.select.language {
  width: 271px;
}

.select select {
  appearance: none;
  display: block;
  width: 100%;
  height: 32px;
  padding: 0 24px 0 9px;
  border: 1px solid #a9adad;
  border-radius: 4px;
  background: #fff;
  font: inherit;
  color: #2c3335;
}

.select svg {
  position: absolute;
  top: 13px;
  right: 8px;
  fill: none;
  stroke: #33393b;
  stroke-width: 2;
  pointer-events: none;
}

/* Scrollbar */
.scrollbar {
  display: flex;
  flex-direction: column;
  align-items: center;
  flex: none;
  width: 15px;
  padding: 7px 0;
  background: #f1f3f3;
}

.track {
  flex: 1;
  width: 100%;
  padding-top: 141px;
}

.thumb {
  height: 149px;
  background: #bfc2c2;
}

/* Taskbar */
.taskbar {
  display: flex;
  flex: none;
  height: 42px;
  background: linear-gradient(to right, #263033, #3b3a39 12%, #3b3a39 62%, #272b2e 75%, #1b2226);
  color: #f0f2f2;
}

.system-buttons {
  display: grid;
  grid-template-columns: 1fr 1fr;
  flex: none;
  width: 100px;
}

.apps {
  display: grid;
  grid-template-columns: repeat(16, 1fr);
  flex: 0 1 661px;
  margin-left: 2px;
}

.apps button {
  position: relative;
  min-width: 0;
}

.apps .running::after {
  content: "";
  position: absolute;
  right: 4px;
  bottom: 0;
  left: 4px;
  height: 3px;
  background: #76b5e2;
}

.apps .active {
  background: #5a5d5f;
}

.apps .active::after,
.apps .alert::after {
  right: 0;
  left: 0;
}

.apps .alert {
  background: #b0672b;
}

.apps .alert::after {
  background: #f5730c;
}

.badge-cntt {
  font: 700 6px "Liberation Sans", sans-serif;
  fill: #d02020;
}

.skype-s {
  font: 700 17px "Open Sans", sans-serif;
  fill: #fff;
}

.badge-count {
  font: 600 11px "Open Sans", sans-serif;
  fill: #fff;
}

.letter-p {
  padding-bottom: 6px;
  font-family: "Open Sans", sans-serif;
  font-size: 28px;
  font-weight: 800;
  line-height: 26px;
  color: #fff;
}

.app-scroll {
  display: grid;
  grid-template-rows: 1fr 1fr;
  flex: none;
  width: 17px;
  background: #eef1f1;
}

.tray {
  display: flex;
  align-items: center;
  flex: 1;
}

.tray-icons {
  display: grid;
  grid-template-columns: repeat(8, 25px);
  align-items: center;
  justify-items: center;
}

.unikey {
  font: 700 13px "Liberation Sans", sans-serif;
  fill: #a3232f;
}

.lang {
  margin-left: 8px;
  font-size: 12px;
}

.clock {
  display: flex;
  flex-direction: column;
  align-items: center;
  margin-left: 13px;
  font-size: 12px;
  line-height: 20px;
}

.notifications {
  margin-left: auto;
  margin-right: 16px;
}
</style>
